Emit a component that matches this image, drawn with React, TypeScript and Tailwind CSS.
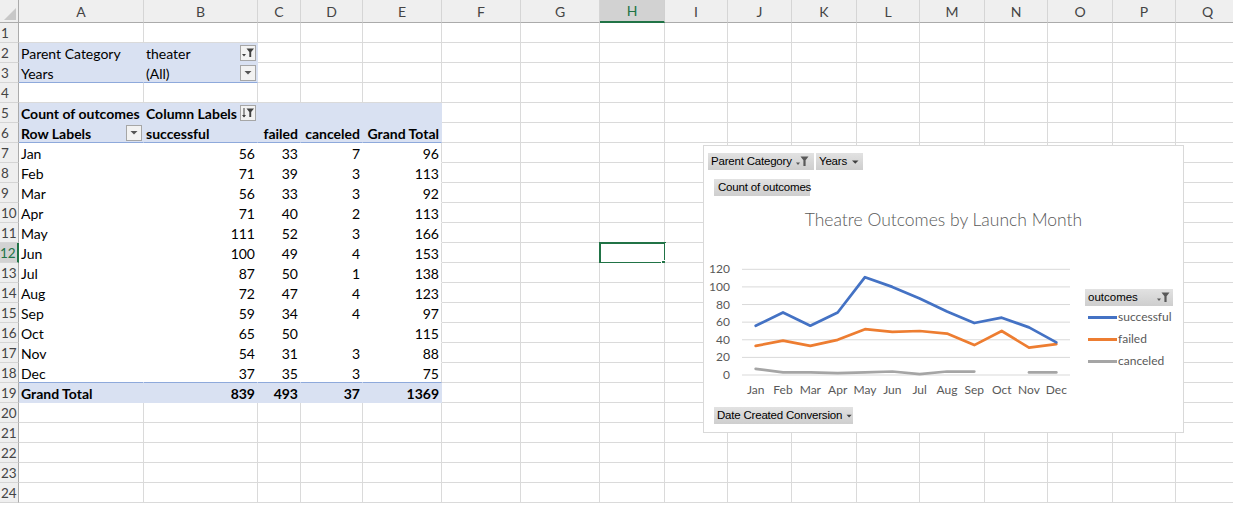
import React from "react";

type Col = { l: string; w: string };
const cols: Col[] = [
  { l: "A", w: "w-[125px]" },
  { l: "B", w: "w-[114px]" },
  { l: "C", w: "w-[43px]" },
  { l: "D", w: "w-[62px]" },
  { l: "E", w: "w-[79px]" },
  { l: "F", w: "w-[79px]" },
  { l: "G", w: "w-[79px]" },
  { l: "H", w: "w-[65px]" },
  { l: "I", w: "w-[63px]" },
  { l: "J", w: "w-[64px]" },
  { l: "K", w: "w-[65px]" },
  { l: "L", w: "w-[63px]" },
  { l: "M", w: "w-[65px]" },
  { l: "N", w: "w-[63px]" },
  { l: "O", w: "w-[65px]" },
  { l: "P", w: "w-[63px]" },
  { l: "Q", w: "w-[64px]" },
];

const months = ["Jan", "Feb", "Mar", "Apr", "May", "Jun", "Jul", "Aug", "Sep", "Oct", "Nov", "Dec"];
const succ = [56, 71, 56, 71, 111, 100, 87, 72, 59, 65, 54, 37];
const fail = [33, 39, 33, 40, 52, 49, 50, 47, 34, 50, 31, 35];
const canc: (number | null)[] = [7, 3, 3, 2, 3, 4, 1, 4, 4, null, 3, 3];
const tot = [96, 113, 92, 113, 166, 153, 138, 123, 97, 115, 88, 75];

function FilteredIcon() {
  return (
    <svg width="14" height="12" viewBox="0 0 14 12">
      <path d="M1 7 H5 L3 9.5 Z" fill="#404040" />
      <path d="M5.5 1.5 H13 L10.2 5 V10 H8.3 V5 Z" fill="#404040" />
    </svg>
  );
}

function CellBtn({ kind }: { kind: "filter" | "drop" | "sort" }) {
  return (
    <div className="w-[16px] h-[16px] shrink-0 border border-[#a6a6a6] bg-[#f2f2f2] flex items-center justify-center mr-[1px]">
      {kind === "filter" && <FilteredIcon />}
      {kind === "drop" && (
        <svg width="10" height="6" viewBox="0 0 10 6">
          <path d="M1.5 1 H8.5 L5 4.5 Z" fill="#555" />
        </svg>
      )}
      {kind === "sort" && (
        <svg width="14" height="12" viewBox="0 0 14 12">
          <path d="M3 1 V10" stroke="#404040" strokeWidth="1" />
          <path d="M1 8 H5 L3 10.5 Z" fill="#404040" />
          <path d="M5.5 1.5 H13 L10.2 5 V10 H8.3 V5 Z" fill="#404040" />
        </svg>
      )}
    </div>
  );
}

type Cell = { text?: string; align?: "l" | "r"; bold?: boolean; btn?: "filter" | "drop" | "sort" };

function pivotContent(r: number, c: number): Cell | null {
  if (r === 2 && c === 0) return { text: "Parent Category" };
  if (r === 2 && c === 1) return { text: "theater", btn: "filter" };
  if (r === 3 && c === 0) return { text: "Years" };
  if (r === 3 && c === 1) return { text: "(All)", btn: "drop" };
  if (r === 5 && c === 0) return { text: "Count of outcomes", bold: true };
  if (r === 5 && c === 1) return { text: "Column Labels", bold: true, btn: "sort" };
  if (r === 6) {
    if (c === 0) return { text: "Row Labels", bold: true, btn: "drop" };
    if (c === 1) return { text: "successful", bold: true };
    if (c === 2) return { text: "failed", bold: true, align: "r" };
    if (c === 3) return { text: "canceled", bold: true, align: "r" };
    if (c === 4) return { text: "Grand Total", bold: true, align: "r" };
  }
  if (r >= 7 && r <= 18) {
    const i = r - 7;
    if (c === 0) return { text: months[i] };
    if (c === 1) return { text: String(succ[i]), align: "r" };
    if (c === 2) return { text: String(fail[i]), align: "r" };
    if (c === 3) return { text: canc[i] === null ? "" : String(canc[i]), align: "r" };
    if (c === 4) return { text: String(tot[i]), align: "r" };
  }
  if (r === 19) {
    if (c === 0) return { text: "Grand Total", bold: true };
    if (c === 1) return { text: "839", bold: true, align: "r" };
    if (c === 2) return { text: "493", bold: true, align: "r" };
    if (c === 3) return { text: "37", bold: true, align: "r" };
    if (c === 4) return { text: "1369", bold: true, align: "r" };
  }
  return null;
}

function cellStyle(r: number, c: number): string {
  const inFilter = (r === 2 || r === 3) && c <= 1;
  const inHead = (r === 5 || r === 6) && c <= 4;
  const inBody = r >= 7 && r <= 18 && c <= 4;
  const inTotal = r === 19 && c <= 4;
  if (inFilter) {
    return r === 3
      ? "bg-[#d9e1f2] border-r border-r-[#d9e1f2] border-b border-b-[#8ea9db]"
      : "bg-[#d9e1f2] border-r border-r-[#d9e1f2] border-b border-b-[#d9e1f2]";
  }
  if (inHead) {
    return r === 6
      ? "bg-[#d9e1f2] border-r border-r-[#d9e1f2] border-b border-b-[#8ea9db]"
      : "bg-[#d9e1f2] border-r border-r-[#d9e1f2] border-b border-b-[#d9e1f2]";
  }
  if (inBody) {
    const rb = c === 4 ? "border-r border-r-[#dadada]" : "border-r border-r-white";
    const bb = r === 18 ? "border-b border-b-[#8ea9db]" : "border-b border-b-white";
    return "bg-white " + rb + " " + bb;
  }
  if (inTotal) {
    return "bg-[#d9e1f2] border-r border-r-[#d9e1f2] border-b border-b-[#d9e1f2]";
  }
  return "bg-white border-r border-r-[#dadada] border-b border-b-[#dadada]";
}

function ChartBtn({ label, icon, w }: { label: string; icon: "filter" | "drop"; w: string }) {
  return (
    <div
      className={
        w +
        " h-[17px] flex items-center gap-[3px] pl-[3px] bg-gradient-to-b from-[#e2e2e2] to-[#cecece] text-[11.5px] text-black font-['Liberation_Sans',Arial,sans-serif] leading-none whitespace-nowrap tracking-[-0.2px]"
      }
    >
      <span>{label}</span>
      {icon === "filter" ? (
        <svg width="15" height="11" viewBox="0 0 15 11">
          <path d="M1 6.5 H5 L3 9 Z" fill="#595959" />
          <path d="M5.5 0.5 H13.5 L10.6 4.2 V10 H8.4 V4.2 Z" fill="#595959" />
        </svg>
      ) : (
        <svg width="10" height="8" viewBox="0 0 10 8">
          <path d="M2 2.5 H8.5 L5.25 5.8 Z" fill="#404040" />
        </svg>
      )}
    </div>
  );
}

function Chart() {
  const x = (i: number) => 38 + 27.333 * (i + 0.5);
  const y = (v: number) => 143 - v * 0.8808;
  const pts = (arr: (number | null)[], from: number, to: number) =>
    arr
      .slice(from, to + 1)
      .map((v, k) => `${x(from + k).toFixed(1)},${y(v as number).toFixed(1)}`)
      .join(" ");
  const ticks = [0, 20, 40, 60, 80, 100, 120];
  return (
    <div className="absolute left-[703px] top-[145px] w-[481px] h-[288px] border border-[#d9d9d9] bg-white font-[Lato,sans-serif]">
      <div className="flex gap-[2px] pl-[4px] pt-[7px]">
        <ChartBtn label="Parent Category" icon="filter" w="w-[106px]" />
        <ChartBtn label="Years" icon="drop" w="w-[47px]" />
      </div>
      <div className="flex pl-[10px] pt-[9px]">
        <div className="w-[96px] h-[17px] flex items-center pl-[4px] bg-gradient-to-b from-[#e2e2e2] to-[#cecece] text-[11.5px] text-black font-['Liberation_Sans',Arial,sans-serif] leading-none whitespace-nowrap tracking-[-0.2px]">
          Count of outcomes
        </div>
      </div>
      <div className="h-[36px] pt-[12px] text-center text-[17.5px] leading-[24px] text-[#595959] font-light">
        Theatre Outcomes by Launch Month
      </div>
      <div className="flex">
        <svg width="372" height="168" viewBox="0 0 372 168" className="shrink-0">
          {ticks.map((t) => (
            <g key={t}>
              <line x1="38" x2="366" y1={y(t)} y2={y(t)} stroke="#d9d9d9" strokeWidth="1" />
              <text
                x="26"
                y={y(t) + 4}
                textAnchor="end"
                fontSize="12"
                fill="#595959"
                fontFamily="Lato, sans-serif"
              >
                {t}
              </text>
            </g>
          ))}
          {months.map((m, i) => (
            <text
              key={m}
              x={x(i)}
              y="162"
              textAnchor="middle"
              fontSize="12"
              fill="#595959"
              fontFamily="Lato, sans-serif"
            >
              {m}
            </text>
          ))}
          <polyline points={pts(canc, 0, 8)} fill="none" stroke="#a5a5a5" strokeWidth="2.75" strokeLinejoin="round" strokeLinecap="round" />
          <polyline points={pts(canc, 10, 11)} fill="none" stroke="#a5a5a5" strokeWidth="2.75" strokeLinejoin="round" strokeLinecap="round" />
          <polyline points={pts(fail, 0, 11)} fill="none" stroke="#ed7d31" strokeWidth="2.75" strokeLinejoin="round" strokeLinecap="round" />
          <polyline points={pts(succ, 0, 11)} fill="none" stroke="#4472c4" strokeWidth="2.75" strokeLinejoin="round" strokeLinecap="round" />
        </svg>
        <div className="ml-[9px] pt-[57px] flex flex-col">
          <div className="w-[88px] h-[17px] flex items-center justify-between pl-[3px] pr-[2px] bg-gradient-to-b from-[#e2e2e2] to-[#cecece] text-[11.5px] text-black font-['Liberation_Sans',Arial,sans-serif] leading-none">
            <span>outcomes</span>
            <svg width="15" height="11" viewBox="0 0 15 11">
              <path d="M1 6.5 H5 L3 9 Z" fill="#595959" />
              <path d="M5.5 0.5 H13.5 L10.6 4.2 V10 H8.4 V4.2 Z" fill="#595959" />
            </svg>
          </div>
          {[
            { n: "successful", c: "bg-[#4472c4]" },
            { n: "failed", c: "bg-[#ed7d31]" },
            { n: "canceled", c: "bg-[#a5a5a5]" },
          ].map((it) => (
            <div key={it.n} className="h-[22px] flex items-center pl-[3px]">
              <div className={"w-[29px] h-[3px] " + it.c} />
              <span className="text-[12px] text-[#595959] leading-none ml-[1px]">{it.n}</span>
            </div>
          ))}
        </div>
      </div>
      <div className="flex pl-[10px] pt-[7px]">
        <ChartBtn label="Date Created Conversion" icon="drop" w="w-[139px]" />
      </div>
    </div>
  );
}

export default function App() {
  const rows = Array.from({ length: 24 }, (_, i) => i + 1);
  return (
    <div className="relative w-[1233px] h-[505px] overflow-hidden bg-white font-[Lato,sans-serif] text-[14px] text-black">
      <div className="flex h-[23px]">
        <div className="relative w-[19px] shrink-0 bg-[#efefef] border-r border-r-[#ababab] border-b border-b-[#ababab]">
          <svg className="absolute right-[2px] bottom-[2px]" width="12" height="12" viewBox="0 0 12 12">
            <path d="M12 0 V12 H0 Z" fill="#c8c8c8" />
          </svg>
        </div>
        {cols.map((c) =>
          c.l === "H" ? (
            <div
              key={c.l}
              className={
                c.w +
                " shrink-0 bg-[#d2d2d2] border-r border-r-[#d0d0d0] border-b-2 border-b-[#217346] flex items-center justify-center text-[#217346] text-[14px]"
              }
            >
              {c.l}
            </div>
          ) : (
            <div
              key={c.l}
              className={
                c.w +
                " shrink-0 bg-[#efefef] border-r border-r-[#d5d5d5] border-b border-b-[#ababab] flex items-center justify-center text-[#444] text-[14px]"
              }
            >
              {c.l}
            </div>
          )
        )}
      </div>
      {rows.map((r) => (
        <div key={r} className="flex h-[20px]">
          {r === 12 ? (
            <div className="w-[19px] shrink-0 bg-[#d2d2d2] border-r-2 border-r-[#217346] border-b border-b-[#d5d5d5] flex items-center pt-[2px] text-[13.5px] text-[#217346] leading-none">
              {r}
            </div>
          ) : (
            <div className="w-[19px] shrink-0 bg-[#efefef] border-r border-r-[#ababab] border-b border-b-[#d5d5d5] flex items-center pl-[1px] pt-[2px] text-[13.5px] text-[#444] leading-none">
              {r}
            </div>
          )}
          {cols.map((c, ci) => {
            const content = pivotContent(r, ci);
            const isSel = r === 12 && c.l === "H";
            return (
              <div
                key={c.l}
                className={
                  c.w +
                  " shrink-0 relative flex items-center whitespace-nowrap leading-none " +
                  cellStyle(r, ci) +
                  (content?.align === "r" ? " justify-end pr-[2px]" : " justify-between pl-[2px]") +
                  (content?.bold ? " font-bold" : "")
                }
              >
                {content?.text !== undefined && <span className="pt-[3px]">{content.text}</span>}
                {content?.btn && <CellBtn kind={content.btn} />}
                {isSel && (
                  <>
                    <div className="absolute left-[-1px] top-[-1px] w-[67px] h-[22px] border-2 border-[#217346]" />
                    <div className="absolute left-[61px] top-[17px] w-[6px] h-[6px] bg-[#217346] border border-white" />
                  </>
                )}
              </div>
            );
          })}
        </div>
      ))}
      <Chart />
    </div>
  );
}
